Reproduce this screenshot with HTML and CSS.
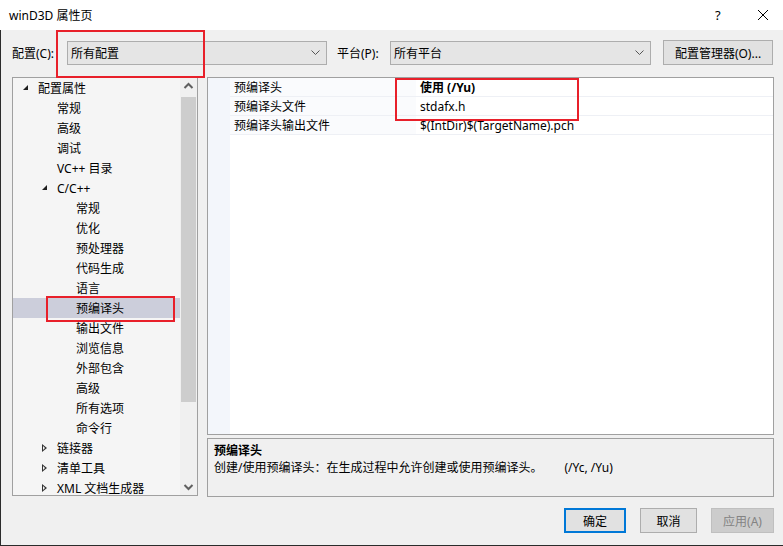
FILE: index.html
```html
<!DOCTYPE html>
<html lang="zh-CN">
<head>
    <meta charset="UTF-8">
    <title>winD3D 属性页</title>
    <link rel="stylesheet" href="styles.css">
</head>
<body>
    <div class="titlebar">
        <span class="title">winD3D 属性页</span>
        <span class="help">?</span>
        <span class="close">
            <svg width="12" height="12" viewBox="0 0 12 12"><path d="M1 1 L11 11 M11 1 L1 11" stroke="#000" stroke-width="1" fill="none"/></svg>
        </span>
    </div>

    <div class="window">
        <div class="toolbar">
            <label class="field-label">配置(C):</label>
            <div class="combo combo-config">
                <span>所有配置</span>
                <svg class="chevron" width="9" height="6" viewBox="0 0 9 6"><polyline points="0.5,0.5 4.5,4.5 8.5,0.5" stroke="#555" fill="none"/></svg>
            </div>
            <label class="field-label platform-label">平台(P):</label>
            <div class="combo combo-platform">
                <span>所有平台</span>
                <svg class="chevron" width="9" height="6" viewBox="0 0 9 6"><polyline points="0.5,0.5 4.5,4.5 8.5,0.5" stroke="#555" fill="none"/></svg>
            </div>
            <button class="btn btn-manager">配置管理器(O)...</button>
            <div class="mark mark-config"></div>
        </div>

        <div class="main">
            <div class="tree">
                <ul class="tree-list">
                    <li class="lvl0"><span class="exp"></span>配置属性</li>
                    <li class="lvl1">常规</li>
                    <li class="lvl1">高级</li>
                    <li class="lvl1">调试</li>
                    <li class="lvl1">VC++ 目录</li>
                    <li class="lvl1"><span class="exp"></span>C/C++</li>
                    <li class="lvl2">常规</li>
                    <li class="lvl2">优化</li>
                    <li class="lvl2">预处理器</li>
                    <li class="lvl2">代码生成</li>
                    <li class="lvl2">语言</li>
                    <li class="lvl2 selected">预编译头<div class="mark mark-tree"></div></li>
                    <li class="lvl2">输出文件</li>
                    <li class="lvl2">浏览信息</li>
                    <li class="lvl2">外部包含</li>
                    <li class="lvl2">高级</li>
                    <li class="lvl2">所有选项</li>
                    <li class="lvl2">命令行</li>
                    <li class="lvl1"><span class="col"></span>链接器</li>
                    <li class="lvl1"><span class="col"></span>清单工具</li>
                    <li class="lvl1"><span class="col"></span>XML 文档生成器</li>
                </ul>
                <div class="scrollbar">
                    <svg class="arrow" width="17" height="17" viewBox="0 0 17 17"><polyline points="4.5,10 8.5,6 12.5,10" stroke="#606060" stroke-width="2" fill="none"/></svg>
                    <div class="track"><div class="thumb"></div></div>
                    <svg class="arrow" width="17" height="17" viewBox="0 0 17 17"><polyline points="4.5,7 8.5,11 12.5,7" stroke="#606060" stroke-width="2" fill="none"/></svg>
                </div>
            </div>

            <div class="right">
                <div class="grid">
                    <div class="gutter"></div>
                    <div class="rows">
                        <div class="grid-row">
                            <div class="prop-name">预编译头</div>
                            <div class="prop-value bold">使用 (/Yu)</div>
                        </div>
                        <div class="grid-row">
                            <div class="prop-name">预编译头文件</div>
                            <div class="prop-value">stdafx.h</div>
                        </div>
                        <div class="grid-row">
                            <div class="prop-name">预编译头输出文件</div>
                            <div class="prop-value">$(IntDir)$(TargetName).pch</div>
                        </div>
                    </div>
                    <div class="mark mark-value"></div>
                </div>
                <div class="description">
                    <div class="desc-title">预编译头</div>
                    <div class="desc-text">创建/使用预编译头：在生成过程中允许创建或使用预编译头。<span class="desc-switch">(/Yc, /Yu)</span></div>
                </div>
            </div>
        </div>

        <div class="footer">
            <button class="btn btn-ok">确定</button>
            <button class="btn">取消</button>
            <button class="btn btn-disabled">应用(A)</button>
        </div>
    </div>
</body>
</html>
```

FILE: styles.css
```css
body {
    margin: 0;
    width: 783px;
    height: 546px;
    overflow: hidden;
    background-color: #f0f0f0;
    font-family: "Noto Sans", "Noto Sans CJK SC", sans-serif;
    font-size: 12px;
    color: #000;
}

.titlebar {
    display: flex;
    align-items: center;
    height: 30px;
    background-color: #fff;
}

.title {
    padding-left: 9px;
    font-size: 12px;
    flex: 1;
}

.help {
    width: 20px;
    font-size: 13px;
    margin-right: 22px;
}

.close {
    display: flex;
    width: 26px;
}

.window {
    height: 516px;
    box-sizing: border-box;
    border-left: 1px solid #2b2b2b;
    border-bottom: 1px solid #2b2b2b;
}

/* toolbar */
.toolbar {
    position: relative;
    display: flex;
    align-items: center;
    height: 25px;
    padding: 10px 0 0 11px;
}

.field-label {
    width: 55px;
}

.platform-label {
    margin-left: 10px;
    width: 53px;
}

.combo {
    display: flex;
    align-items: center;
    justify-content: space-between;
    height: 24px;
    box-sizing: border-box;
    padding: 0 6px 0 3px;
    background-color: #e5e5e5;
    border: 1px solid #adadad;
}

.combo-config {
    width: 260px;
}

.combo-platform {
    width: 261px;
}

.btn {
    height: 25px;
    box-sizing: border-box;
    background-color: #e1e1e1;
    border: 1px solid #adadad;
    font-family: inherit;
    font-size: 12px;
    color: #000;
    padding: 0;
}

.btn-manager {
    width: 110px;
    margin-left: 12px;
}

/* red annotation boxes */
.mark {
    position: absolute;
    border: 2px solid #e8202a;
    box-sizing: border-box;
    pointer-events: none;
}

.mark-config {
    left: 55px;
    top: 0;
    width: 149px;
    height: 48px;
}

.mark-tree {
    left: 33px;
    top: -2px;
    width: 129px;
    height: 26px;
}

.mark-value {
    left: 187px;
    top: 0;
    width: 184px;
    height: 43px;
}

/* main area */
.main {
    display: flex;
    padding: 12px 9px 0 11px;
}

.tree {
    display: flex;
    width: 186px;
    height: 419px;
    box-sizing: border-box;
    border: 1px solid #a0a0a0;
    background-color: #f5f5f5;
}

.tree-list {
    list-style: none;
    margin: 0;
    padding: 0;
    flex: 1;
}

.tree-list li {
    position: relative;
    display: flex;
    align-items: center;
    height: 20px;
    white-space: nowrap;
}

.lvl0 {
    padding-left: 25px;
}

.lvl1 {
    padding-left: 44px;
}

.lvl2 {
    padding-left: 63px;
}

.tree-list li.selected {
    background-color: #cccedb;
}

.exp,
.col {
    position: absolute;
}

.lvl0 .exp { left: 10px; }
.lvl1 .exp, .lvl1 .col { left: 29px; }

.exp {
    top: 7px;
    width: 0;
    height: 0;
    border-left: 5px solid transparent;
    border-bottom: 5px solid #1e1e1e;
}

.col {
    top: 6px;
    width: 0;
    height: 0;
    border-top: 4px solid transparent;
    border-bottom: 4px solid transparent;
    border-left: 5px solid #333;
}

.col::after {
    content: "";
    position: absolute;
    left: -4px;
    top: -2px;
    border-top: 2px solid transparent;
    border-bottom: 2px solid transparent;
    border-left: 2px solid #f5f5f5;
}

.scrollbar {
    display: flex;
    flex-direction: column;
    width: 17px;
    background-color: #f0f0f0;
}

.track {
    flex: 1;
    padding: 2px 1px;
    display: flex;
}

.thumb {
    width: 15px;
    height: 305px;
    background-color: #cdcdcd;
}

/* property grid */
.right {
    display: flex;
    flex-direction: column;
    margin-left: 9px;
    flex: 1;
}

.grid {
    position: relative;
    display: flex;
    height: 358px;
    box-sizing: border-box;
    border: 1px solid #a0a0a0;
    background-color: #fff;
}

.gutter {
    width: 22px;
    background-color: #f3f6fb;
}

.rows {
    flex: 1;
}

.grid-row {
    display: flex;
    height: 19px;
    box-sizing: border-box;
    border-bottom: 1px solid #eef0f5;
}

.prop-name {
    width: 186px;
    padding: 2px 0 0 4px;
    box-sizing: border-box;
    background-color: #fafbfd;
    line-height: 16px;
}

.prop-value {
    padding: 2px 0 0 4px;
    line-height: 16px;
}

.bold {
    font-weight: bold;
}

.description {
    margin-top: 3px;
    height: 59px;
    box-sizing: border-box;
    border: 1px solid #a0a0a0;
    padding: 3px 6px;
}

.desc-title {
    font-weight: bold;
    line-height: 17px;
}

.desc-text {
    line-height: 17px;
}

.desc-switch {
    margin-left: 22px;
}

/* footer */
.footer {
    display: flex;
    justify-content: flex-end;
    padding: 11px 9px 0 0;
}

.footer .btn {
    width: 57px;
    margin-left: 14px;
}

.footer .btn-ok {
    width: 62px;
    border: 2px solid #0078d7;
}

.footer .btn-disabled {
    width: 63px;
    background-color: #cccccc;
    border-color: #bfbfbf;
    color: #838383;
}
```
